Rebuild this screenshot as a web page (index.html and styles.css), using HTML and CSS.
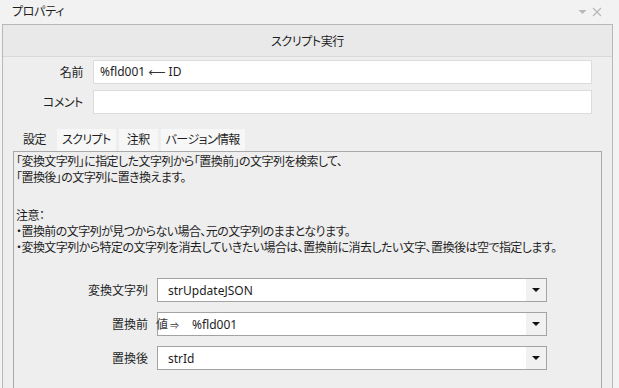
FILE: index.html
```html
<!DOCTYPE html>
<html lang="ja">
<head>
<meta charset="utf-8">
<title>プロパティ</title>
<link rel="stylesheet" href="styles.css">
</head>
<body>
<div class="window">
  <div class="titlebar">
    <span class="title">プロパティ</span>
    <div class="title-icons">
      <svg class="ic-menu" width="9" height="6" viewBox="0 0 9 6"><path d="M0.5 1h8L4.5 5z" fill="#b8b8b8"/></svg>
      <svg class="ic-close" width="10" height="10" viewBox="0 0 10 10"><path d="M1 1l8 8M9 1l-8 8" stroke="#b8b8b8" stroke-width="1.2" fill="none"/></svg>
    </div>
  </div>
  <div class="panel">
    <div class="panel-header">スクリプト実行</div>
    <div class="form">
      <div class="row"><span class="label">名前</span><div class="field">%fld001 <span class="larrow">⟵</span> ID</div></div>
      <div class="row"><span class="label">コメント</span><div class="field"></div></div>
    </div>
    <div class="tabs">
      <span class="tab active">設定</span>
      <span class="tab">スクリプト</span>
      <span class="tab">注釈</span>
      <span class="tab">バージョン情報</span>
    </div>
    <div class="tabbox">
      <div class="desc">
        <p>「変換文字列」に指定した文字列から「置換前」の文字列を検索して、</p>
        <p>「置換後」の文字列に置き換えます。</p>
        <p class="blank">&nbsp;</p>
        <p>注意：</p>
        <p>・置換前の文字列が見つからない場合、元の文字列のままとなります。</p>
        <p>・変換文字列から特定の文字列を消去していきたい場合は、置換前に消去したい文字、置換後は空で指定します。</p>
      </div>
      <div class="params">
        <div class="prow"><span class="plabel">変換文字列</span><div class="select"><span class="val">strUpdateJSON</span><span class="arrow"></span></div></div>
        <div class="prow"><span class="plabel">置換前</span><div class="select"><span class="prefix">値<small>⇒</small></span><span class="val val-pre">%fld001</span><span class="arrow"></span></div></div>
        <div class="prow"><span class="plabel">置換後</span><div class="select"><span class="val">strId</span><span class="arrow"></span></div></div>
      </div>
    </div>
  </div>
</div>
</body>
</html>
```

FILE: styles.css
```css
* { box-sizing: border-box; }
html, body {
  margin: 0;
  padding: 0;
  width: 619px;
  height: 388px;
  overflow: hidden;
  background: #f3f3f3;
}
body {
  font-family: "Noto Sans", "Noto Sans CJK JP", sans-serif;
  font-size: 12px;
  font-feature-settings: "palt";
  color: #1e1e1e;
}
.window {
  display: flex;
  flex-direction: column;
  height: 388px;
}
.titlebar {
  height: 24px;
  flex: none;
  display: flex;
  align-items: center;
  justify-content: space-between;
  padding: 0 17px 0 12px;
  background: #f2f2f2;
}
.title { line-height: 16px; letter-spacing: -0.3px; }
.title-icons {
  display: flex;
  align-items: center;
  gap: 5px;
}
.panel {
  flex: 1;
  margin: 0 6px 0 2px;
  border: 1px solid #b8b8b8;
  border-bottom: none;
  background: #eeeeee;
  display: flex;
  flex-direction: column;
  min-height: 0;
}
.panel-header {
  height: 32px;
  flex: none;
  display: flex;
  align-items: center;
  justify-content: center;
  background: #e9e9e9;
  border-bottom: 1px solid #d9d9d9;
  letter-spacing: -0.4px;
}
.form {
  padding: 3px 20px 0 0;
  display: flex;
  flex-direction: column;
  gap: 6px;
}
.row {
  display: flex;
  align-items: center;
  height: 24px;
}
.label {
  width: 80px;
  text-align: right;
  margin-right: 10px;
  letter-spacing: -0.4px;
}
.field {
  flex: 1;
  height: 24px;
  background: #ffffff;
  border: 1px solid #dcdcdc;
  padding: 0 6px;
  line-height: 22px;
}
.larrow {
  font-family: "DejaVu Sans", sans-serif;
  font-size: 12px;
  color: #333333;
}
.tabs {
  display: flex;
  gap: 3px;
  margin: 15px 0 0 12px;
  height: 22px;
  flex: none;
}
.tab {
  padding: 0 5px;
  min-width: 39px;
  text-align: center;
  line-height: 22px;
  letter-spacing: -0.6px;
  background: #f7f7f7;
}
.tab.active {
  background: #eeeeee;
}
.tabbox {
  flex: 1;
  margin: 0 10px 0 10px;
  border: 1px solid #a9a9a9;
  border-bottom: none;
  padding: 2px 2px 0 2px;
}
.desc {
  letter-spacing: -0.55px;
}
.desc p {
  margin: 0;
  line-height: 16px;
  white-space: nowrap;
}
.desc p.blank { height: 22px; }
.params {
  margin-top: 22px;
  display: flex;
  flex-direction: column;
  gap: 10px;
}
.prow {
  display: flex;
  align-items: center;
  height: 24px;
}
.plabel {
  width: 132px;
  text-align: right;
  margin-right: 9px;
}
.select {
  width: 390px;
  height: 24px;
  background: #ffffff;
  border: 1px solid #a3a3a3;
  display: flex;
  align-items: center;
}
.val {
  flex: 1;
  padding-left: 10px;
}
.val.val-pre { padding-left: 13px; }
.prefix {
  margin-left: -2px;
  color: #3a3a3a;
}
.prefix small {
  font-size: 9px;
  margin-left: 2px;
}
.arrow {
  width: 20px;
  height: 22px;
  background: #f1f1f1;
  display: flex;
  align-items: center;
  justify-content: center;
}
.arrow::after {
  content: "";
  border-left: 4px solid transparent;
  border-right: 4px solid transparent;
  border-top: 4px solid #111111;
}
```
